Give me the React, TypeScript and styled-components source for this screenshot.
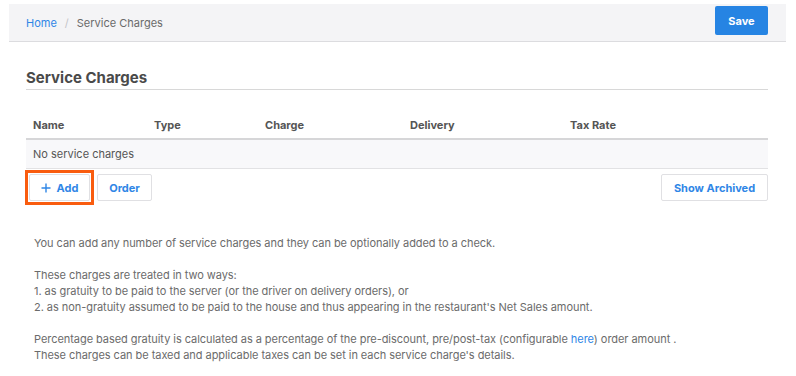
import React from 'react'
import styled, { createGlobalStyle } from 'styled-components'

const GlobalStyle = createGlobalStyle`
  body {
    margin: 0;
    background: #fff;
    font-family: Inter, "Noto Sans", sans-serif;
    color: #555;
  }
`

const Page = styled.div`
  padding: 4px 10px 0 9px;
`

const Header = styled.div`
  height: 37px;
  background: #f4f4f6;
  border-bottom: 1px solid #dcdcdf;
  display: flex;
  align-items: center;
  justify-content: space-between;
  padding: 0 18px 0 17px;
`

const Crumbs = styled.div`
  display: flex;
  align-items: center;
  font-size: 11px;
  color: #6a6a6a;
`

const CrumbLink = styled.a`
  color: #2f86e6;
  text-decoration: none;
`

const CrumbSep = styled.span`
  color: #c4c4c8;
  margin: 0 8px;
`

const SaveButton = styled.button`
  width: 53px;
  height: 29px;
  border: none;
  border-radius: 2px;
  background: #2684e3;
  color: #fff;
  font-family: inherit;
  font-size: 11px;
  font-weight: 700;
  margin-top: -4px;
`

const Content = styled.div`
  padding: 0 18px 0 17px;
`

const Title = styled.h2`
  margin: 26px 0 0;
  padding-bottom: 2px;
  font-size: 15px;
  font-weight: 700;
  color: #4a4a4a;
  border-bottom: 1px solid #d8d8d8;
`

const Table = styled.div`
  margin-top: 21px;
`

const HeadRow = styled.div`
  display: grid;
  grid-template-columns: 121px 111px 145px 160px 1fr;
  padding: 0 7px;
  height: 27px;
  align-items: center;
  border-bottom: 2px solid #d6d6d8;
  font-size: 11px;
  font-weight: 700;
  color: #555;
`

const EmptyRow = styled.div`
  height: 28px;
  display: flex;
  align-items: center;
  padding: 0 7px;
  background: #f8f8fa;
  border-bottom: 1px solid #e2e2e4;
  font-size: 11px;
  color: #555;
`

const Actions = styled.div`
  display: flex;
  align-items: center;
  margin-top: 1px;
`

const Highlight = styled.div`
  border: 3px solid #f95c0f;
  padding: 1px;
  margin-left: -1px;
  display: flex;
`

const Button = styled.button<{ $width: number }>`
  width: ${p => p.$width}px;
  height: 27px;
  background: #fff;
  border: 1px solid #e0e0e3;
  border-radius: 2px;
  color: #2f86e6;
  font-family: inherit;
  font-size: 11px;
  font-weight: 700;
  display: flex;
  align-items: center;
  justify-content: center;
  gap: 6px;
  padding: 0;
`

const Spacer = styled.div`
  flex: 1;
`

const Gap = styled.div`
  width: 3px;
`

const Info = styled.div`
  margin-top: 30px;
  padding-left: 8px;
  font-size: 11px;
  letter-spacing: -0.05px;
  line-height: 16px;
  color: #6b6b6b;
`

const Para = styled.p`
  margin: 0 0 16px;
`

const Link = styled.a`
  color: #2f86e6;
  text-decoration: none;
`

const PlusIcon = () => (
  <svg width="10" height="10" viewBox="0 0 10 10">
    <path d="M5 0.5v9M0.5 5h9" stroke="#2f86e6" strokeWidth="1.4" />
  </svg>
)

const App = () => (
  <Page>
    <GlobalStyle />
    <Header>
      <Crumbs>
        <CrumbLink href="#">Home</CrumbLink>
        <CrumbSep>/</CrumbSep>
        <span>Service Charges</span>
      </Crumbs>
      <SaveButton>Save</SaveButton>
    </Header>
    <Content>
      <Title>Service Charges</Title>
      <Table>
        <HeadRow>
          <span>Name</span>
          <span>Type</span>
          <span>Charge</span>
          <span>Delivery</span>
          <span>Tax Rate</span>
        </HeadRow>
        <EmptyRow>No service charges</EmptyRow>
      </Table>
      <Actions>
        <Highlight>
          <Button $width={61}>
            <PlusIcon />
            Add
          </Button>
        </Highlight>
        <Gap />
        <Button $width={55}>Order</Button>
        <Spacer />
        <Button $width={107}>Show Archived</Button>
      </Actions>
      <Info>
        <Para>You can add any number of service charges and they can be optionally added to a check.</Para>
        <Para>
          These charges are treated in two ways:
          <br />
          1. as gratuity to be paid to the server (or the driver on delivery orders), or
          <br />
          2. as non-gratuity assumed to be paid to the house and thus appearing in the restaurant's Net Sales amount.
        </Para>
        <Para>
          Percentage based gratuity is calculated as a percentage of the pre-discount, pre/post-tax (configurable{' '}
          <Link href="#">here</Link>) order amount .
          <br />
          These charges can be taxed and applicable taxes can be set in each service charge's details.
        </Para>
      </Info>
    </Content>
  </Page>
)

export default App
